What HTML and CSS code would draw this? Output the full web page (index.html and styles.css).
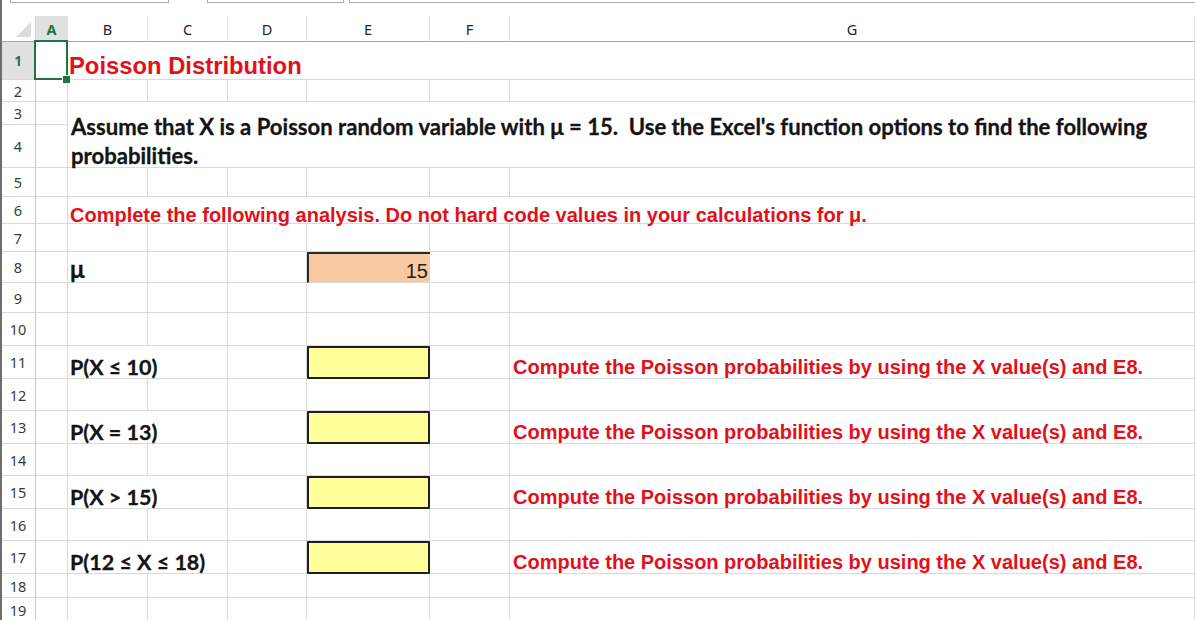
FILE: index.html
```html
<!DOCTYPE html>
<html lang="en">
<head>
<meta charset="utf-8">
<title>Poisson Distribution</title>
<link rel="stylesheet" href="styles.css">
</head>
<body>
<div class="app">
  <div class="toolbar">
    <div class="namebox"></div>
    <div class="fx"></div>
    <div class="formula"></div>
  </div>
  <div class="sheet">
    <div class="corner"><span class="tri"></span></div>
    <div class="ch sel">A</div>
    <div class="ch">B</div>
    <div class="ch">C</div>
    <div class="ch">D</div>
    <div class="ch">E</div>
    <div class="ch">F</div>
    <div class="ch">G</div>

    <div class="rh sel">1</div>
    <div class="c a1"></div>
    <div class="c span6 title">Poisson Distribution</div>

    <div class="rh">2</div>
    <div class="c"></div><div class="c"></div><div class="c"></div><div class="c"></div><div class="c"></div><div class="c"></div><div class="c"></div>

    <div class="rh">3</div>
    <div class="c"></div>
    <div class="c span6 rows2 intro">Assume that X is a Poisson random variable with μ = 15.&nbsp; Use the Excel's function options to find the following probabilities.</div>
    <div class="rh">4</div>
    <div class="c"></div>

    <div class="rh">5</div>
    <div class="c"></div><div class="c"></div><div class="c"></div><div class="c"></div><div class="c"></div><div class="c"></div><div class="c"></div>

    <div class="rh">6</div>
    <div class="c"></div>
    <div class="c span6 note">Complete the following analysis. Do not hard code values in your calculations for μ.</div>

    <div class="rh">7</div>
    <div class="c"></div><div class="c"></div><div class="c"></div><div class="c"></div><div class="c"></div><div class="c"></div><div class="c"></div>

    <div class="rh">8</div>
    <div class="c"></div>
    <div class="c label mu-label">μ</div>
    <div class="c"></div><div class="c"></div>
    <div class="c mu">15</div>
    <div class="c"></div><div class="c"></div>

    <div class="rh">9</div>
    <div class="c"></div><div class="c"></div><div class="c"></div><div class="c"></div><div class="c"></div><div class="c"></div><div class="c"></div>

    <div class="rh">10</div>
    <div class="c"></div><div class="c"></div><div class="c"></div><div class="c"></div><div class="c"></div><div class="c"></div><div class="c"></div>

    <div class="rh">11</div>
    <div class="c"></div>
    <div class="c span2 label">P(X ≤ 10)</div>
    <div class="c"></div>
    <div class="c answer"></div>
    <div class="c"></div>
    <div class="c hint">Compute the Poisson probabilities by using the X value(s) and E8.</div>

    <div class="rh">12</div>
    <div class="c"></div><div class="c"></div><div class="c"></div><div class="c"></div><div class="c"></div><div class="c"></div><div class="c"></div>

    <div class="rh">13</div>
    <div class="c"></div>
    <div class="c span2 label">P(X = 13)</div>
    <div class="c"></div>
    <div class="c answer"></div>
    <div class="c"></div>
    <div class="c hint">Compute the Poisson probabilities by using the X value(s) and E8.</div>

    <div class="rh">14</div>
    <div class="c"></div><div class="c"></div><div class="c"></div><div class="c"></div><div class="c"></div><div class="c"></div><div class="c"></div>

    <div class="rh">15</div>
    <div class="c"></div>
    <div class="c span2 label">P(X &gt; 15)</div>
    <div class="c"></div>
    <div class="c answer"></div>
    <div class="c"></div>
    <div class="c hint">Compute the Poisson probabilities by using the X value(s) and E8.</div>

    <div class="rh">16</div>
    <div class="c"></div><div class="c"></div><div class="c"></div><div class="c"></div><div class="c"></div><div class="c"></div><div class="c"></div>

    <div class="rh">17</div>
    <div class="c"></div>
    <div class="c span2 label">P(12 ≤ X ≤ 18)</div>
    <div class="c"></div>
    <div class="c answer"></div>
    <div class="c"></div>
    <div class="c hint">Compute the Poisson probabilities by using the X value(s) and E8.</div>

    <div class="rh">18</div>
    <div class="c"></div><div class="c"></div><div class="c"></div><div class="c"></div><div class="c"></div><div class="c"></div><div class="c"></div>

    <div class="rh">19</div>
    <div class="c"></div><div class="c"></div><div class="c"></div><div class="c"></div><div class="c"></div><div class="c"></div><div class="c"></div>
  </div>
</div>
</body>
</html>
```

FILE: styles.css
```css
* { box-sizing: border-box; }
html, body { margin: 0; padding: 0; background: #fff; }
body { width: 1195px; height: 620px; overflow: hidden; }

.app {
  width: 1195px;
  height: 620px;
  border-left: 2px solid #6e6e6e;
  overflow: hidden;
}

.toolbar {
  height: 16px;
  display: flex;
  align-items: flex-start;
}
.toolbar > div {
  height: 3px;
  border: 1px solid #ababab;
  border-top: none;
  background: #fff;
}
.namebox { margin-left: 8px; width: 159px; }
.fx { margin-left: 38px; width: 137px; }
.formula { margin-left: 5px; flex: 1; border-right: none !important; }

.sheet {
  display: grid;
  grid-template-columns: 34px 32px 80px 80px 79px 123px 80px 1fr;
  grid-template-rows: 26px 38px 22px 23px 43px 29px 27px 28px 31px 30px 33px 33px 32px 33px 32px 33px 32px 33px 24px 24px;
  font-family: "Liberation Sans", Arial, sans-serif;
}

.corner, .ch {
  border-bottom: 1px solid #a9a9a9;
  border-right: 1px solid #e2e2e2;
  background: #fff;
}
.corner { position: relative; border-right-color: #d6d6d6; }
.tri {
  position: absolute;
  left: 14px;
  top: 6px;
  width: 0;
  height: 0;
  border-style: solid;
  border-width: 0 0 15px 15px;
  border-color: transparent transparent #dcdcdc transparent;
}
.ch {
  display: flex;
  align-items: center;
  justify-content: center;
  padding-top: 1px;
  font-family: "Noto Sans", "Open Sans", sans-serif;
  font-size: 14.5px;
  color: #262626;
}
.ch.sel {
  background: #e1e1e1;
  color: #217346;
  font-weight: bold;
  border-bottom: 2px solid #217346;
}

.rh {
  display: flex;
  align-items: center;
  justify-content: center;
  border-right: 1px solid #c9c9c9;
  border-bottom: 1px solid #d9d9d9;
  font-family: "Noto Sans", "Open Sans", sans-serif;
  font-size: 14.5px;
  color: #3a3a3a;
  padding-right: 1px;
}
.rh.sel {
  background: #e1e1e1;
  color: #217346;
  font-weight: bold;
  font-size: 13.5px;
}

.c {
  border-right: 1px solid #dadada;
  border-bottom: 1px solid #dadada;
  display: flex;
  align-items: flex-end;
  white-space: nowrap;
}

.span2 { grid-column: span 2; }
.span6 { grid-column: span 6; }
.rows2 { grid-row: span 2; }

.a1 { position: relative; }
.a1::before {
  content: "";
  position: absolute;
  left: -2px;
  top: -2px;
  right: -1px;
  bottom: -1px;
  border: 2px solid #217346;
}
.a1::after {
  content: "";
  position: absolute;
  right: -3px;
  bottom: -4px;
  width: 7px;
  height: 7px;
  background: #217346;
  border-left: 1px solid #fff;
  border-top: 1px solid #fff;
}

.title {
  color: #e3101a;
  font-weight: bold;
  font-size: 23.8px;
  line-height: 1;
  padding-left: 1px;
  padding-bottom: 1px;
}

.intro {
  white-space: normal;
  align-items: flex-start;
  font-family: Lato, "Noto Sans", sans-serif;
  font-weight: bold;
  font-size: 22.1px;
  line-height: 28.5px;
  color: #141414;
  -webkit-text-stroke: 0.3px #141414;
  padding-left: 3px;
  padding-top: 11px;
  padding-right: 20px;
}

.note {
  align-items: flex-start;
  color: #e3101a;
  font-weight: bold;
  font-size: 20px;
  line-height: 20px;
  padding-left: 2px;
  padding-top: 8px;
}

.label {
  font-family: Lato, "Noto Sans", sans-serif;
  font-weight: bold;
  font-size: 21.5px;
  line-height: 1;
  color: #141414;
  -webkit-text-stroke: 0.3px #141414;
  padding-left: 2px;
  padding-bottom: 0;
}
.mu-label { font-size: 24px; padding-bottom: 1px; }

.mu {
  background: #f9c9a0;
  border-top: 2px solid #2a2a2a;
  border-left: 2px solid #2a2a2a;
  border-right: none;
  justify-content: flex-end;
  font-size: 20px;
  line-height: 1;
  color: #222;
  padding-right: 2px;
  padding-bottom: 1px;
}

.answer {
  background: #ffff99;
  border: 2px solid #1e1e1e;
  border-radius: 1px;
}

.hint {
  color: #e3101a;
  font-weight: bold;
  font-size: 20px;
  line-height: 1;
  padding-left: 3px;
  padding-bottom: 1px;
}
```
